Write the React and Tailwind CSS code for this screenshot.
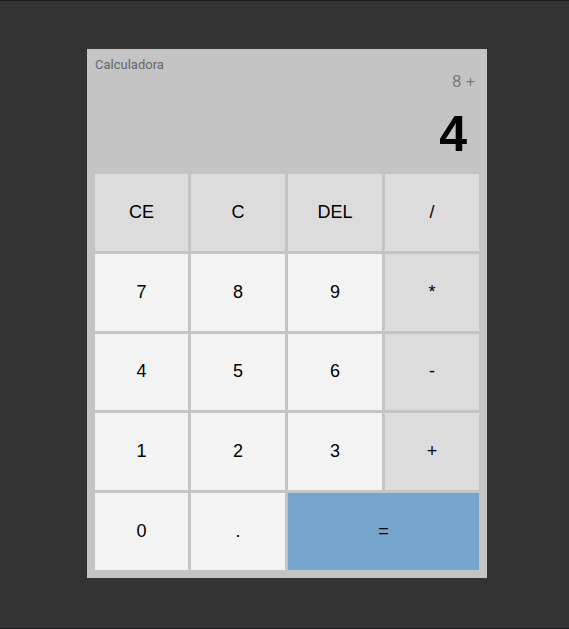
import React from "react";

const keys = [
  { l: "CE", t: "op" },
  { l: "C", t: "op" },
  { l: "DEL", t: "op" },
  { l: "/", t: "op" },
  { l: "7", t: "num" },
  { l: "8", t: "num" },
  { l: "9", t: "num" },
  { l: "*", t: "op" },
  { l: "4", t: "num" },
  { l: "5", t: "num" },
  { l: "6", t: "num" },
  { l: "-", t: "op" },
  { l: "1", t: "num" },
  { l: "2", t: "num" },
  { l: "3", t: "num" },
  { l: "+", t: "op" },
  { l: "0", t: "num" },
  { l: ".", t: "num" },
  { l: "=", t: "eq" },
];

export default function App() {
  return (
    <div className="h-[629px] w-full bg-[#333333] border-y border-[#1c1c26] pt-[48px] pl-[87px]">
      <div className="w-[400px] h-[529px] bg-[#c4c4c4] p-2 flex flex-col">
        <div className="h-[117px] flex flex-col">
          <div className="text-[13px] leading-[15px] text-[#666666] font-['Roboto',sans-serif]">
            Calculadora
          </div>
          <div className="mt-[1px] text-right pr-1 text-[16px] leading-[18px] text-[#777777] font-['Liberation_Sans',Arial,sans-serif]">
            8 +
          </div>
          <div className="mt-[18px] text-right pr-3 text-[50px] leading-[50px] font-bold text-black font-['Liberation_Sans',Arial,sans-serif]">
            4
          </div>
        </div>
        <div className="h-[396px] grid grid-cols-[93px_94px_94px_94px] grid-rows-5 gap-[3px]">
          {keys.map((k) => (
            <button
              key={k.l}
              className={
                "flex items-center justify-center text-[18px] text-black font-['Liberation_Sans',Arial,sans-serif] " +
                (k.t === "op"
                  ? "bg-[#dcdcdc]"
                  : k.t === "eq"
                  ? "bg-[#75a5cc] col-span-2"
                  : "bg-[#f3f3f3]")
              }
            >
              {k.l}
            </button>
          ))}
        </div>
      </div>
    </div>
  );
}
